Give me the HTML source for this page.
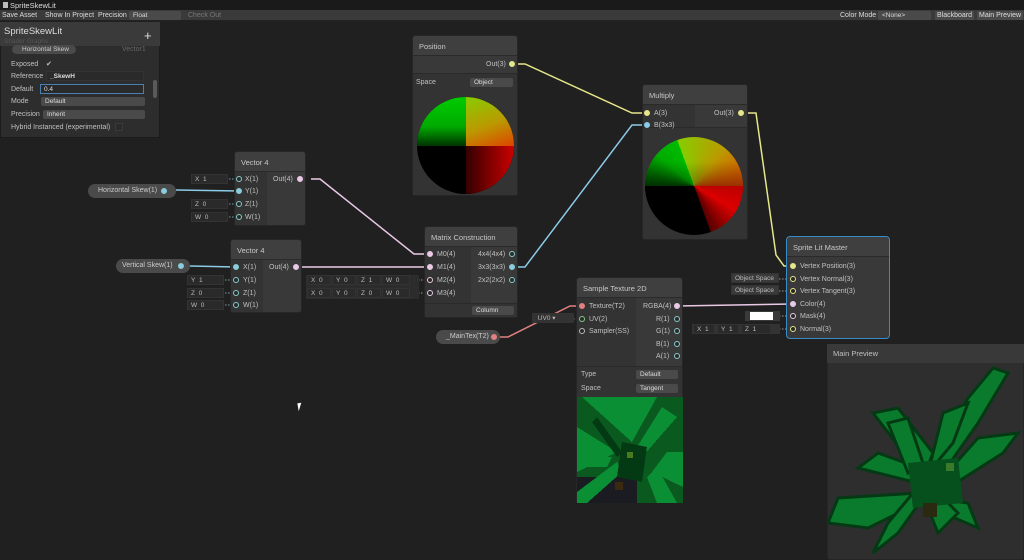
<!DOCTYPE html>
<html><head><meta charset="utf-8"><style>
*{box-sizing:border-box;margin:0;padding:0}
body{width:1024px;height:560px;background:#202020;font-family:"Liberation Sans",sans-serif;font-size:7px;color:#c4c4c4;position:relative;overflow:hidden}
.a{position:absolute}
.node{position:absolute;background:#393939;border-radius:3px;border:1px solid #262626}
.hd{position:absolute;left:0;right:0;top:0;height:20px;background:#3f3f3f;border-bottom:1px solid #2a2a2a;border-radius:3px 3px 0 0;padding:6px 0 0 6px;font-size:7.5px;color:#c8c8c8}
.t{position:absolute;white-space:nowrap;font-size:7px;color:#c0c0c0}
.p{position:absolute;width:6px;height:6px;border-radius:50%;border:1.3px solid #8cc;background:#2a2a2a}
.f{position:absolute;height:10px;background:#2a2a2a;border:1px solid #333;font-size:6.5px;color:#bbb;padding-left:3px;line-height:9px;white-space:nowrap}
.pill{position:absolute;background:#4a4a4a;border-radius:7px;height:14px;font-size:7px;line-height:14px;padding-left:10px;color:#ccc}
.dd{position:absolute;height:9px;background:#555;border-radius:2px;font-size:6.5px;line-height:9px;padding-left:4px;color:#ddd}
.circ{position:absolute;border-radius:50%;overflow:hidden;background:#000}
.circ div{position:absolute;width:50%;height:50%}
</style></head><body>
<div class="a" style="left:0;top:0;width:1024px;height:10px;background:#1a1a1a"></div>
<div class="t" style="left:10px;top:1px;font-size:7.5px;color:#ddd">SpriteSkewLit</div>
<div class="a" style="left:3px;top:2px;width:5px;height:6px;background:#bbb"></div>
<div class="a" style="left:0;top:10px;width:1024px;height:11px;background:#3a3a3a;border-bottom:1px solid #222"></div>
<div class="t" style="left:2px;top:12px;color:#ddd">Save Asset</div>
<div class="t" style="left:45px;top:12px;color:#ddd">Show In Project</div>
<div class="t" style="left:98px;top:12px;color:#ddd">Precision</div>
<div class="dd" style="left:129px;top:11px;width:52px;background:#4a4a4a">Float</div>
<div class="t" style="left:188px;top:12px;color:#777">Check Out</div>
<div class="t" style="left:840px;top:12px;color:#ddd">Color Mode</div>
<div class="dd" style="left:878px;top:11px;width:53px;background:#4a4a4a">&lt;None&gt;</div>
<div class="a" style="left:935px;top:11px;width:39px;height:9px;background:#4a4a4a"></div>
<div class="t" style="left:937px;top:12px;color:#ddd">Blackboard</div>
<div class="a" style="left:977px;top:11px;width:46px;height:9px;background:#4a4a4a"></div>
<div class="t" style="left:979px;top:12px;color:#ddd">Main Preview</div>

<!-- blackboard -->
<div class="a" style="left:0;top:22px;width:160px;height:116px;background:#2d2d2d;border:1px solid #1c1c1c"></div>
<div class="a" style="left:0;top:22px;width:160px;height:24px;background:#3a3a3a"></div>
<div class="t" style="left:4px;top:26px;font-size:9.5px;color:#ddd">SpriteSkewLit</div>
<div class="t" style="left:4px;top:38px;font-size:6.5px;color:#555">Shader Graphs</div>
<div class="t" style="left:144px;top:28px;font-size:13px;color:#ddd">+</div>
<div class="pill" style="left:12px;top:45px;width:64px;height:9px;line-height:9px;font-size:6.5px">Horizontal Skew</div>
<div class="t" style="left:122px;top:46px;color:#666">Vector1</div>
<div class="t" style="left:11px;top:60px">Exposed &nbsp;&nbsp;&nbsp;✔</div>
<div class="t" style="left:11px;top:73px">Reference</div>
<div class="f" style="left:46px;top:71px;width:98px;font-weight:bold;color:#ddd">_SkewH</div>
<div class="t" style="left:11px;top:86px">Default</div>
<div class="f" style="left:40px;top:84px;width:104px;border-color:#4a80b0;color:#ddd">0.4</div>
<div class="t" style="left:11px;top:98px">Mode</div>
<div class="dd" style="left:41px;top:97px;width:104px;background:#4a4a4a">Default</div>
<div class="t" style="left:11px;top:111px">Precision</div>
<div class="dd" style="left:43px;top:110px;width:102px;background:#4a4a4a">Inherit</div>
<div class="t" style="left:11px;top:124px">Hybrid Instanced (experimental)</div>
<div class="a" style="left:115px;top:123px;width:8px;height:8px;background:#2a2a2a;border:1px solid #3a3a3a"></div>
<div class="a" style="left:153px;top:80px;width:4px;height:18px;background:#5a5a5a;border-radius:2px"></div>

<!-- wires -->
<svg class="a" style="left:0;top:0" width="1024" height="560" fill="none" stroke-width="1.5">
<path d="M512 64 L525 64 L632 113 L647 113" stroke="#e6e68a"/>
<path d="M742 113 L756 113 L776 255 L784 266 L792 266" stroke="#e6e68a"/>
<path d="M513 267 L525 267 L632 125 L647 125" stroke="#8ccbe8"/>
<path d="M311 179 L320 179 L414 254 L430 254" stroke="#eac9e6"/>
<path d="M296 267 L430 267" stroke="#eac9e6"/>
<path d="M677 306 L792 304" stroke="#eac9e6"/>
<path d="M176 190 L240 191" stroke="#8ccbe8"/>
<path d="M190 266 L236 267" stroke="#8ccbe8"/>
<path d="M495 337 L508 337 L570 306 L583 306" stroke="#e08080"/>
<g stroke="#8ccbe8" stroke-width="0.8" stroke-dasharray="1.5 1.5"><path d="M226 179H240M226 204H240M226 217H240M222 280H236M222 293H236M222 305H236"/></g>
<g stroke="#bbb" stroke-width="0.8" stroke-dasharray="1.5 1.5"><path d="M418 280H430M418 293H430M570 319H583M776 279H792M776 291H792M776 316H792M776 329H792"/></g>
</svg>

<!-- Position -->
<div class="node" style="left:412px;top:35px;width:106px;height:161px">
<div class="hd">Position</div>
<div class="a" style="left:0;top:37px;right:0;height:1px;background:#2a2a2a"></div>
<div class="a" style="left:0;top:38px;right:0;bottom:0;background:#333"></div>
</div>
<div class="t" style="left:486px;top:61px">Out(3)</div>
<div class="p" style="left:509px;top:61px;border-color:#e6e68a;background:#e6e68a"></div>
<div class="t" style="left:416px;top:79px">Space</div>
<div class="dd" style="left:470px;top:78px;width:43px;background:#4a4a4a">Object</div>
<div class="circ" style="left:417px;top:97px;width:97px;height:97px">
<div style="left:0;top:0;background:linear-gradient(to bottom,#0c0,#0a0 60%,#030)"></div>
<div style="left:50%;top:0;background:linear-gradient(160deg,#8c0,#b90 55%,#d40)"></div>
<div style="left:50%;top:50%;background:linear-gradient(to right,#300,#c00)"></div>
</div>

<!-- Multiply -->
<div class="node" style="left:642px;top:84px;width:106px;height:156px">
<div class="hd">Multiply</div>
<div class="a" style="left:0;top:20px;width:52px;height:22px;background:#333"></div>
<div class="a" style="left:0;top:42px;right:0;bottom:0;background:#333;border-top:1px solid #2a2a2a"></div>
</div>
<div class="p" style="left:644px;top:110px;border-color:#e6e68a;background:#e6e68a"></div>
<div class="t" style="left:654px;top:110px">A(3)</div>
<div class="p" style="left:644px;top:122px;border-color:#8ccbe8;background:#8ccbe8"></div>
<div class="t" style="left:654px;top:122px">B(3x3)</div>
<div class="t" style="left:714px;top:110px">Out(3)</div>
<div class="p" style="left:738px;top:110px;border-color:#e6e68a;background:#e6e68a"></div>
<div class="circ" style="left:645px;top:137px;width:98px;height:98px;background:conic-gradient(from -20deg,#8c0 0deg,#b90 60deg,#d40 110deg,#b00 110deg,#d00 140deg,#500 180deg,#000 180deg,#000 290deg,#040 290deg,#0a0 330deg,#0b0 360deg)"></div>
<div class="circ" style="left:645px;top:137px;width:98px;height:98px;background:linear-gradient(to bottom,rgba(0,0,0,0) 25%,rgba(0,0,0,.3) 50%,rgba(0,0,0,0) 50%)"></div>

<!-- Vector4 top -->
<div class="node" style="left:234px;top:151px;width:72px;height:75px">
<div class="hd">Vector 4</div>
<div class="a" style="left:0;top:20px;width:32px;bottom:0;background:#333"></div>
</div>
<div class="t" style="left:245px;top:176px">X(1)</div><div class="p" style="left:236px;top:176px"></div>
<div class="t" style="left:245px;top:188px">Y(1)</div><div class="p" style="left:236px;top:188px;background:#8ccbe8"></div>
<div class="t" style="left:245px;top:201px">Z(1)</div><div class="p" style="left:236px;top:201px"></div>
<div class="t" style="left:245px;top:214px">W(1)</div><div class="p" style="left:236px;top:214px"></div>
<div class="t" style="left:273px;top:176px">Out(4)</div><div class="p" style="left:297px;top:176px;border-color:#eac9e6;background:#eac9e6"></div>
<div class="f" style="left:191px;top:174px;width:37px">X&nbsp; 1</div>
<div class="f" style="left:191px;top:199px;width:37px">Z&nbsp; 0</div>
<div class="f" style="left:191px;top:212px;width:37px">W&nbsp; 0</div>
<div class="pill" style="left:88px;top:184px;width:88px">Horizontal Skew(1)</div>
<div class="p" style="left:161px;top:188px;background:#8ccbe8"></div>

<!-- Vector4 bottom -->
<div class="node" style="left:230px;top:239px;width:72px;height:74px">
<div class="hd">Vector 4</div>
<div class="a" style="left:0;top:20px;width:32px;bottom:0;background:#333"></div>
</div>
<div class="t" style="left:243px;top:264px">X(1)</div><div class="p" style="left:233px;top:264px;background:#8ccbe8"></div>
<div class="t" style="left:243px;top:277px">Y(1)</div><div class="p" style="left:233px;top:277px"></div>
<div class="t" style="left:243px;top:290px">Z(1)</div><div class="p" style="left:233px;top:290px"></div>
<div class="t" style="left:243px;top:302px">W(1)</div><div class="p" style="left:233px;top:302px"></div>
<div class="t" style="left:269px;top:264px">Out(4)</div><div class="p" style="left:293px;top:264px;border-color:#eac9e6;background:#eac9e6"></div>
<div class="f" style="left:187px;top:275px;width:37px">Y&nbsp; 1</div>
<div class="f" style="left:187px;top:288px;width:37px">Z&nbsp; 0</div>
<div class="f" style="left:187px;top:300px;width:37px">W&nbsp; 0</div>
<div class="pill" style="left:116px;top:259px;width:74px;padding-left:6px">Vertical Skew(1)</div>
<div class="p" style="left:178px;top:263px;background:#8ccbe8"></div>

<!-- Matrix construction -->
<div class="node" style="left:424px;top:226px;width:94px;height:92px">
<div class="hd">Matrix Construction</div>
<div class="a" style="left:0;top:20px;width:46px;height:56px;background:#333"></div>
<div class="a" style="left:0;top:76px;right:0;bottom:0;background:#333;border-top:1px solid #2a2a2a"></div>
</div>
<div class="t" style="left:437px;top:251px">M0(4)</div><div class="p" style="left:427px;top:251px;border-color:#eac9e6;background:#eac9e6"></div>
<div class="t" style="left:437px;top:264px">M1(4)</div><div class="p" style="left:427px;top:264px;border-color:#eac9e6;background:#eac9e6"></div>
<div class="t" style="left:437px;top:277px">M2(4)</div><div class="p" style="left:427px;top:277px;border-color:#eac9e6"></div>
<div class="t" style="left:437px;top:290px">M3(4)</div><div class="p" style="left:427px;top:290px;border-color:#eac9e6"></div>
<div class="t" style="left:478px;top:251px">4x4(4x4)</div><div class="p" style="left:509px;top:251px"></div>
<div class="t" style="left:478px;top:264px">3x3(3x3)</div><div class="p" style="left:509px;top:264px;background:#8ccbe8"></div>
<div class="t" style="left:478px;top:277px">2x2(2x2)</div><div class="p" style="left:509px;top:277px"></div>
<div class="dd" style="left:472px;top:306px;width:42px;background:#4a4a4a">Column</div>
<div class="a" style="left:306px;top:275px;width:113px;height:24px;background:#2c2c2c"></div>
<div class="f" style="left:307px;top:275px;width:24px">X&nbsp; 0</div><div class="f" style="left:332px;top:275px;width:24px">Y&nbsp; 0</div><div class="f" style="left:357px;top:275px;width:24px">Z&nbsp; 1</div><div class="f" style="left:382px;top:275px;width:28px">W&nbsp; 0</div>
<div class="f" style="left:307px;top:288px;width:24px">X&nbsp; 0</div><div class="f" style="left:332px;top:288px;width:24px">Y&nbsp; 0</div><div class="f" style="left:357px;top:288px;width:24px">Z&nbsp; 0</div><div class="f" style="left:382px;top:288px;width:28px">W&nbsp; 0</div>

<!-- MainTex pill -->
<div class="pill" style="left:436px;top:330px;width:64px">_MainTex(T2)</div>
<div class="p" style="left:491px;top:334px;border-color:#e08080;background:#e08080"></div>
<div class="f" style="left:532px;top:313px;width:42px;background:#333">&nbsp;UV0 ▾</div>

<!-- Sample texture -->
<div class="node" style="left:576px;top:277px;width:107px;height:226px">
<div class="hd">Sample Texture 2D</div>
<div class="a" style="left:0;top:20px;width:59px;height:68px;background:#333"></div>
<div class="a" style="left:0;top:88px;right:0;height:32px;background:#333;border-top:1px solid #2a2a2a"></div>
</div>
<div class="t" style="left:589px;top:303px">Texture(T2)</div><div class="p" style="left:579px;top:303px;border-color:#e08080;background:#e08080"></div>
<div class="t" style="left:589px;top:316px">UV(2)</div><div class="p" style="left:579px;top:316px;border-color:#8c8"></div>
<div class="t" style="left:589px;top:328px">Sampler(SS)</div><div class="p" style="left:579px;top:328px;border-color:#bbb"></div>
<div class="t" style="left:643px;top:303px">RGBA(4)</div><div class="p" style="left:674px;top:303px;border-color:#eac9e6;background:#eac9e6"></div>
<div class="t" style="left:656px;top:316px">R(1)</div><div class="p" style="left:674px;top:316px"></div>
<div class="t" style="left:656px;top:328px">G(1)</div><div class="p" style="left:674px;top:328px"></div>
<div class="t" style="left:656px;top:341px">B(1)</div><div class="p" style="left:674px;top:341px"></div>
<div class="t" style="left:656px;top:353px">A(1)</div><div class="p" style="left:674px;top:353px"></div>
<div class="t" style="left:581px;top:371px">Type</div><div class="dd" style="left:636px;top:370px;width:42px;background:#4a4a4a">Default</div>
<div class="t" style="left:581px;top:385px">Space</div><div class="dd" style="left:636px;top:384px;width:42px;background:#4a4a4a">Tangent</div>
<svg class="a" style="left:577px;top:397px" width="106" height="106" shape-rendering="crispEdges">
<rect width="106" height="106" fill="#0a5a20"/>
<rect x="0" y="80" width="60" height="26" fill="#1a1c22"/>
<g fill="#0b8f34">
<path d="M5 0 H80 L55 45 Z"/><path d="M85 10 L100 20 L65 60 L60 50Z"/><path d="M0 30 L40 55 L0 75Z"/><path d="M90 55 H106 V90 L75 75Z"/><path d="M0 95 L40 65 L45 75 L10 106 H0Z"/><path d="M70 80 L80 70 L100 106 H80Z"/><path d="M0 60 H35 L30 70 H0Z"/>
</g>
<g fill="#033a14"><path d="M45 45 L70 50 L65 85 L40 80Z"/><path d="M20 20 L45 55 L40 60 L15 25Z"/></g>
<rect x="50" y="55" width="6" height="6" fill="#4a7a20"/>
<rect x="38" y="85" width="8" height="8" fill="#3a2a10"/>
</svg>

<!-- Master -->
<div class="node" style="left:786px;top:236px;width:104px;height:103px;border:1.5px solid #3a8cc8;border-radius:4px">
<div class="hd">Sprite Lit Master</div>
</div>
<div class="t" style="left:800px;top:263px">Vertex Position(3)</div><div class="p" style="left:790px;top:263px;border-color:#e6e68a;background:#e6e68a"></div>
<div class="t" style="left:800px;top:276px">Vertex Normal(3)</div><div class="p" style="left:790px;top:276px;border-color:#e6e68a"></div>
<div class="t" style="left:800px;top:288px">Vertex Tangent(3)</div><div class="p" style="left:790px;top:288px;border-color:#e6e68a"></div>
<div class="t" style="left:800px;top:301px">Color(4)</div><div class="p" style="left:790px;top:301px;border-color:#eac9e6;background:#eac9e6"></div>
<div class="t" style="left:800px;top:313px">Mask(4)</div><div class="p" style="left:790px;top:313px;border-color:#eac9e6"></div>
<div class="t" style="left:800px;top:326px">Normal(3)</div><div class="p" style="left:790px;top:326px;border-color:#e6e68a"></div>
<div class="f" style="left:731px;top:273px;width:48px;background:#3a3a3a">Object Space</div>
<div class="f" style="left:731px;top:285px;width:48px;background:#3a3a3a">Object Space</div>
<div class="a" style="left:745px;top:311px;width:35px;height:10px;background:#3a3a3a"></div>
<div class="a" style="left:750px;top:312px;width:23px;height:8px;background:#fff"></div>
<div class="a" style="left:692px;top:324px;width:88px;height:10px;background:#333"></div>
<div class="f" style="left:693px;top:324px;width:22px">X&nbsp; 1</div><div class="f" style="left:717px;top:324px;width:22px">Y&nbsp; 1</div><div class="f" style="left:741px;top:324px;width:30px">Z&nbsp; 1</div>

<!-- Main preview -->
<div class="a" style="left:827px;top:344px;width:197px;height:216px;background:#2e2e2e;border:1px solid #262626;border-radius:3px"></div>
<div class="a" style="left:827px;top:344px;width:197px;height:19px;background:#393939"></div>
<div class="t" style="left:833px;top:349px;font-size:7.5px">Main Preview</div>
<svg class="a" style="left:828px;top:363px" width="196" height="197">
<g fill="#0a7a2c" stroke="#033a14" stroke-width="3">
<path d="M95 115 L45 50 L70 45 L105 90Z"/><path d="M100 105 L140 35 L165 5 L180 10 L150 60 L115 110Z"/><path d="M110 120 L150 75 L190 70 L175 90 L120 125Z"/><path d="M90 120 L30 105 L50 90 L100 108Z"/><path d="M90 130 L10 135 L0 160 L40 165 L95 138Z"/><path d="M100 135 L140 140 L150 165 L115 150Z"/><path d="M95 135 L70 170 L45 190 L60 160 L85 130Z"/><path d="M110 130 L130 150 L110 170 L100 145Z"/><path d="M100 110 L115 50 L140 40 L125 80Z"/><path d="M80 110 L60 60 L80 55 L95 100Z"/>
</g>
<g fill="#05501c"><path d="M80 100 L130 95 L135 140 L85 145Z"/></g>
<rect x="118" y="100" width="8" height="8" fill="#3a7a2a"/>
<rect x="95" y="140" width="14" height="14" fill="#2a2a10"/>
</svg>
<div class="a" style="left:298px;top:403px;width:0;height:0;border-left:4px solid #fff;border-bottom:8px solid transparent;transform:rotate(-10deg)"></div>
</body></html>
